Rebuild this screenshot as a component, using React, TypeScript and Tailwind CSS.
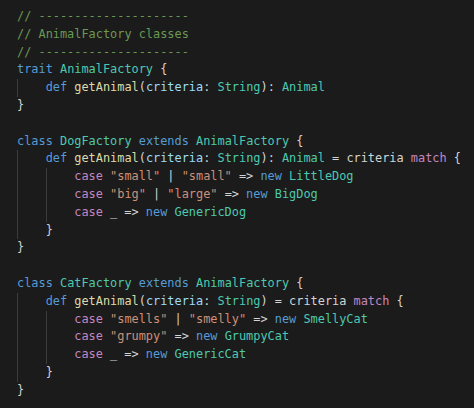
type Tok = [string, string];

const C = {
  cm: "text-[#6a9955]",
  kw: "text-[#569cd6]",
  ty: "text-[#4ec9b0]",
  fn: "text-[#dcdcaa]",
  pa: "text-[#9cdcfe]",
  ct: "text-[#c586c0]",
  st: "text-[#ce9178]",
  tx: "text-[#d4d4d4]",
};

const sig = (ret: boolean): Tok[] => [
  [C.kw, "def"],
  [C.tx, " "],
  [C.fn, "getAnimal"],
  [C.tx, "("],
  [C.pa, "criteria"],
  [C.tx, ": "],
  [C.ty, "String"],
  [C.tx, ")"],
  ...(ret ? ([[C.tx, ": "], [C.ty, "Animal"]] as Tok[]) : []),
];

const lines: { indent: number; toks: Tok[] }[] = [
  { indent: 0, toks: [[C.cm, "// ---------------------"]] },
  { indent: 0, toks: [[C.cm, "// AnimalFactory classes"]] },
  { indent: 0, toks: [[C.cm, "// ---------------------"]] },
  { indent: 0, toks: [[C.kw, "trait"], [C.tx, " "], [C.ty, "AnimalFactory"], [C.tx, " {"]] },
  { indent: 1, toks: sig(true) },
  { indent: 0, toks: [[C.tx, "}"]] },
  { indent: 0, toks: [] },
  {
    indent: 0,
    toks: [[C.kw, "class"], [C.tx, " "], [C.ty, "DogFactory"], [C.tx, " "], [C.kw, "extends"], [C.tx, " "], [C.ty, "AnimalFactory"], [C.tx, " {"]],
  },
  { indent: 1, toks: [...sig(true), [C.tx, " = criteria "], [C.ct, "match"], [C.tx, " {"]] },
  {
    indent: 2,
    toks: [[C.ct, "case"], [C.tx, " "], [C.st, "\"small\""], [C.tx, " | "], [C.st, "\"small\""], [C.tx, " => "], [C.kw, "new"], [C.tx, " "], [C.ty, "LittleDog"]],
  },
  {
    indent: 2,
    toks: [[C.ct, "case"], [C.tx, " "], [C.st, "\"big\""], [C.tx, " | "], [C.st, "\"large\""], [C.tx, " => "], [C.kw, "new"], [C.tx, " "], [C.ty, "BigDog"]],
  },
  { indent: 2, toks: [[C.ct, "case"], [C.tx, " _ => "], [C.kw, "new"], [C.tx, " "], [C.ty, "GenericDog"]] },
  { indent: 1, toks: [[C.tx, "}"]] },
  { indent: 0, toks: [[C.tx, "}"]] },
  { indent: 0, toks: [] },
  {
    indent: 0,
    toks: [[C.kw, "class"], [C.tx, " "], [C.ty, "CatFactory"], [C.tx, " "], [C.kw, "extends"], [C.tx, " "], [C.ty, "AnimalFactory"], [C.tx, " {"]],
  },
  { indent: 1, toks: [...sig(false), [C.tx, " = criteria "], [C.ct, "match"], [C.tx, " {"]] },
  {
    indent: 2,
    toks: [[C.ct, "case"], [C.tx, " "], [C.st, "\"smells\""], [C.tx, " | "], [C.st, "\"smelly\""], [C.tx, " => "], [C.kw, "new"], [C.tx, " "], [C.ty, "SmellyCat"]],
  },
  {
    indent: 2,
    toks: [[C.ct, "case"], [C.tx, " "], [C.st, "\"grumpy\""], [C.tx, " => "], [C.kw, "new"], [C.tx, " "], [C.ty, "GrumpyCat"]],
  },
  { indent: 2, toks: [[C.ct, "case"], [C.tx, " _ => "], [C.kw, "new"], [C.tx, " "], [C.ty, "GenericCat"]] },
  { indent: 1, toks: [[C.tx, "}"]] },
  { indent: 0, toks: [[C.tx, "}"]] },
];

export default function App() {
  return (
    <div className="w-[474px] h-[408px] overflow-hidden bg-[#1b1b1b] pt-[8px] pl-[17px] font-['DejaVu_Sans_Mono',monospace] text-[11.9px] leading-[17.8px] whitespace-pre">
      {lines.map((line, i) => (
        <div key={i} className="flex h-[17.8px]">
          {Array.from({ length: line.indent }).map((_, j) => (
            <span key={j} className="w-[4ch] shrink-0 border-l border-[#3c3c3c]" />
          ))}
          {line.toks.map(([cls, text], k) => (
            <span key={k} className={cls}>
              {text}
            </span>
          ))}
        </div>
      ))}
    </div>
  );
}
